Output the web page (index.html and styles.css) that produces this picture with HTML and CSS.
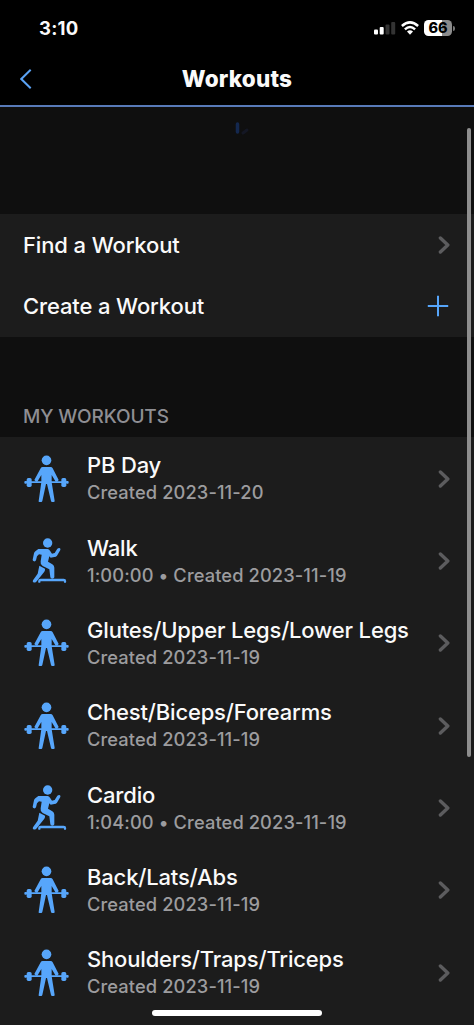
FILE: index.html
```html
<!DOCTYPE html>
<html lang="en">
<head>
<meta charset="utf-8">
<title>Workouts</title>
<link rel="stylesheet" href="styles.css">
</head>
<body>
<svg class="defs" aria-hidden="true">
  <symbol id="chevron" viewBox="0 0 12 20"><path d="M2.400 3 L9.800 10 L2.400 17" fill="none" stroke="currentColor" stroke-width="3.400" stroke-linecap="round" stroke-linejoin="round"/></symbol>
  <symbol id="barbell" viewBox="39 30 138 144">
    <circle cx="109.500" cy="46" r="14.500"/>
    <path d="M98 66H122Q126 66 128 70L146 105L142 110H137L125 90V112L134 168Q134 171 131 171H126Q124 171 123 168L111 117H108L97 168Q96 171 94 171H88Q85 171 86 168L94 112V90L82 110H78L73 105L92 70Q94 66 98 66Z"/>
    <path d="M46 109H174V114H46Z"/>
    <rect x="50" y="99" width="15" height="27" rx="5"/>
    <rect x="154" y="99" width="15" height="27" rx="5"/>
    <rect x="43" y="108" width="8" height="8" rx="3"/>
    <rect x="168" y="108" width="8" height="8" rx="3"/>
  </symbol>
  <symbol id="runner" viewBox="-15 11 138 144">
    <circle cx="59" cy="29" r="14"/>
    <path d="M31 47H59Q63 47 66 52L72 61L80 59L88 46Q93 42 96 45Q98 47 97 50L87 67Q84 71 79 71L68 73L64 69L60 85L73 93Q79 97 79 103V132Q78 136 73 136Q68 136 67 132L64 108L44 98Q36 92 38 84L41 64L33 63L27 69L24 81Q22 85 18 84Q14 83 14 79L18 60Q19 56 23 53Z"/>
    <path d="M34 97L51 106Q52 110 49 115L25 145Q20 149 16 147Q13 145 15 141L29 121Z"/>
    <path d="M34 145V143Q34 140 38 140H107Q111 140 111 143V145" fill="none" stroke="currentColor" stroke-width="7" stroke-linecap="round"/>
  </symbol>
</svg>
<div class="screen">
  <header class="header">
    <div class="status">
      <span class="time">3:10</span>
      <div class="indicators">
        <svg class="signal" viewBox="0 0 22 14"><g fill="#fff"><rect x="0" y="8.500" width="4" height="5" rx="1"/><rect x="5.700" y="6" width="4" height="7.500" rx="1"/></g><g fill="#333"><rect x="11.500" y="3.500" width="4" height="10" rx="1"/><rect x="17.200" y="1" width="4" height="12.500" rx="1"/></g></svg>
        <svg class="wifi" viewBox="0 0 18 14"><g fill="none" stroke="#fff" stroke-width="2.500"><path d="M.9 5Q9-2.200 17.100 5"/><path d="M3.900 8.300Q9 3.600 14.100 8.300"/></g><path d="M6 10.600Q9 8 12 10.600L9 13.700Z" fill="#fff"/></svg>
        <div class="battery"><span class="level">66</span><span class="cap"></span></div>
      </div>
    </div>
    <div class="nav">
      <svg class="back" viewBox="0 0 12 20"><path d="M10.700 .8 L1.300 10 L10.700 19.200" fill="none" stroke="currentColor" stroke-width="2"/></svg>
      <h1 class="title">Workouts</h1>
      <span class="nav-end"></span>
    </div>
  </header>
  <main>
    <div class="refresh"><svg class="spinner" viewBox="0 0 20 16"><path d="M3.500 3V11" stroke="#14284f" stroke-width="3.500" stroke-linecap="round"/><path d="M9 12L13 9" stroke="#141724" stroke-width="3" stroke-linecap="round"/></svg></div>
    <section class="actions">
      <div class="action"><span class="label">Find a Workout</span><svg class="chevron"><use href="#chevron"/></svg></div>
      <div class="action"><span class="label">Create a Workout</span><svg class="plus" viewBox="0 0 22 22"><path d="M11 .8V21.200M.8 11H21.200" stroke="currentColor" stroke-width="2"/></svg></div>
    </section>
    <h2 class="section-title"><span>MY WORKOUTS</span></h2>
    <ul class="workouts">
      <li class="workout"><svg class="figure"><use href="#barbell"/></svg><div class="details"><span class="name">PB Day</span><span class="meta">Created 2023-11-20</span></div><svg class="chevron"><use href="#chevron"/></svg></li>
      <li class="workout"><svg class="figure"><use href="#runner"/></svg><div class="details"><span class="name">Walk</span><span class="meta">1:00:00 • Created 2023-11-19</span></div><svg class="chevron"><use href="#chevron"/></svg></li>
      <li class="workout"><svg class="figure"><use href="#barbell"/></svg><div class="details"><span class="name">Glutes/Upper Legs/Lower Legs</span><span class="meta">Created 2023-11-19</span></div><svg class="chevron"><use href="#chevron"/></svg></li>
      <li class="workout"><svg class="figure"><use href="#barbell"/></svg><div class="details"><span class="name">Chest/Biceps/Forearms</span><span class="meta">Created 2023-11-19</span></div><svg class="chevron"><use href="#chevron"/></svg></li>
      <li class="workout"><svg class="figure"><use href="#runner"/></svg><div class="details"><span class="name">Cardio</span><span class="meta">1:04:00 • Created 2023-11-19</span></div><svg class="chevron"><use href="#chevron"/></svg></li>
      <li class="workout"><svg class="figure"><use href="#barbell"/></svg><div class="details"><span class="name">Back/Lats/Abs</span><span class="meta">Created 2023-11-19</span></div><svg class="chevron"><use href="#chevron"/></svg></li>
      <li class="workout"><svg class="figure"><use href="#barbell"/></svg><div class="details"><span class="name">Shoulders/Traps/Triceps</span><span class="meta">Created 2023-11-19</span></div><svg class="chevron"><use href="#chevron"/></svg></li>
    </ul>
  </main>
  <div class="scrollbar"></div>
  <div class="home-indicator"></div>
</div>
</body>
</html>
```
FILE: styles.css
```css
* { box-sizing: border-box; }
body { margin: 0; background: #0f0f0f; color: #fafafa; font-family: Inter, "Liberation Sans", sans-serif; }
svg { display: block; flex: none; }
.defs { position: absolute; width: 0; height: 0; }
.screen { position: relative; width: 474px; height: 1025px; overflow: hidden; background: #0f0f0f; }
.header { height: 107px; background: #000; border-bottom: 2px solid #587ab8; }
.status { display: flex; justify-content: space-between; height: 52px; padding: 15px 19px 0 39px; }
.time { font-size: 18.5px; font-weight: 700; line-height: 26px; letter-spacing: .25px; }
.indicators { display: flex; align-items: center; height: 26px; }
.signal { width: 22px; height: 14px; margin-right: 5px; }
.wifi { width: 18px; height: 14px; margin-right: 5px; }
.battery { display: flex; align-items: center; gap: 1px; }
.level { width: 28px; height: 16px; border-radius: 4.500px; background: linear-gradient(90deg, #fff 66%, #8b8b8b 66%); color: #000; font-size: 14.5px; font-weight: 800; line-height: 16px; text-align: center; }
.cap { width: 2px; height: 5px; border-radius: 0 2px 2px 0; background: #777; }
.nav { display: flex; align-items: center; justify-content: space-between; height: 53px; padding: 0 20px; }
.back { width: 12px; height: 20px; color: #5aa2f4; }
.nav-end { width: 12px; }
.title { margin: 0; font-size: 22.5px; font-weight: 800; line-height: 28px; letter-spacing: .2px; }
.refresh { height: 107px; padding: 14px 0 0 234px; }
.spinner { width: 20px; height: 16px; }
.actions { height: 123px; background: #1c1c1c; }
.action { display: flex; align-items: center; justify-content: space-between; height: 61.500px; padding: 0 24px 0 23px; font-size: 22px; font-weight: 550; letter-spacing: -.13px; }
.chevron { width: 12px; height: 20px; color: #5c5c5e; }
.plus { width: 22px; height: 22px; margin-right: 1px; color: #56a5fa; }
.section-title { display: flex; align-items: flex-end; height: 100px; margin: 0; padding: 0 23px 7px; color: #8e8e93; font-size: 19px; font-weight: 500; line-height: 26px; letter-spacing: -.12px; }
.workouts { height: 588px; margin: 0; padding: .5px 0 0; list-style: none; background: #1c1c1c; }
.workout { display: flex; align-items: center; height: 82.350px; padding: 0 24px 0 23px; }
.figure { width: 46px; height: 48px; margin-right: 18px; fill: #57a6fb; color: #57a6fb; }
.details { display: flex; flex: 1; flex-direction: column; white-space: nowrap; }
.name { font-size: 22px; font-weight: 550; line-height: 28px; letter-spacing: -.17px; }
.meta { color: #9c9c9f; font-size: 18.3px; font-weight: 550; line-height: 27px; letter-spacing: .1px; }
.scrollbar { position: absolute; top: 128px; right: 3px; width: 4px; height: 629px; border-radius: 2px; background: #8e8e8e; }
.home-indicator { position: absolute; bottom: 9px; left: 152px; width: 170px; height: 6px; border-radius: 3px; background: #fff; }
```
